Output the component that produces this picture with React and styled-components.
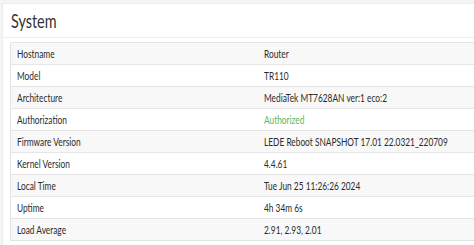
import styled, { createGlobalStyle } from 'styled-components';

const GlobalStyle = createGlobalStyle`
  html, body {
    margin: 0;
    padding: 0;
    background: #f4f4f4;
    font-family: Lato, "Open Sans", sans-serif;
    color: #333;
    overflow: hidden;
  }
`;

const Page = styled.div`
  padding: 3px 0 0 2px;
  height: 245px;
  box-sizing: border-box;
  overflow: hidden;
`;

const Panel = styled.section`
  background: #fff;
  border: 1px solid #ececec;
  border-right: none;
  height: 100%;
  overflow: hidden;
`;

const Header = styled.div`
  padding: 5px 0 6px 8px;
  border-bottom: 1px solid #eee;
`;

const Title = styled.h2`
  margin: 0;
  font-size: 20px;
  font-weight: 400;
  line-height: 22px;
  color: #333;
  transform: scaleX(0.72);
  transform-origin: left center;
`;

const Table = styled.table`
  margin: 4px 0 0 7px;
  width: calc(100% + 40px);
  border-collapse: collapse;
  border: 1px solid #e2e2e2;
  font-size: 11.2px;
`;

const Row = styled.tr`
  background: ${({ $odd }) => ($odd ? '#f8f8f8' : '#fff')};
  border-top: 1px solid #e6e6e6;
`;

const Cell = styled.td`
  height: 21px;
  padding: 0 0 0 6px;
  vertical-align: middle;
  white-space: nowrap;
  color: ${({ $ok }) => ($ok ? '#5cb85c' : '#2b2b2b')};
  width: ${({ $w }) => $w || 'auto'};
`;

// the UI font is a narrow one, so squeeze the text a little
const Text = styled.span`
  display: inline-block;
  transform: scaleX(0.745);
  transform-origin: left center;
`;

const rows = [
  ['Hostname', 'Router'],
  ['Model', 'TR110'],
  ['Architecture', 'MediaTek MT7628AN ver:1 eco:2'],
  ['Authorization', 'Authorized', true],
  ['Firmware Version', 'LEDE Reboot SNAPSHOT 17.01 22.0321_220709'],
  ['Kernel Version', '4.4.61'],
  ['Local Time', 'Tue Jun 25 11:26:26 2024'],
  ['Uptime', '4h 34m 6s'],
  ['Load Average', '2.91, 2.93, 2.01'],
];

export default function App() {
  return (
    <Page>
      <GlobalStyle />
      <Panel>
        <Header>
          <Title>System</Title>
        </Header>
        <Table>
          <tbody>
            {rows.map(([label, value, ok], i) => (
              <Row key={label} $odd={i % 2 === 0}>
                <Cell $w="241px"><Text>{label}</Text></Cell>
                <Cell $ok={ok}><Text>{value}</Text></Cell>
              </Row>
            ))}
          </tbody>
        </Table>
      </Panel>
    </Page>
  );
}
